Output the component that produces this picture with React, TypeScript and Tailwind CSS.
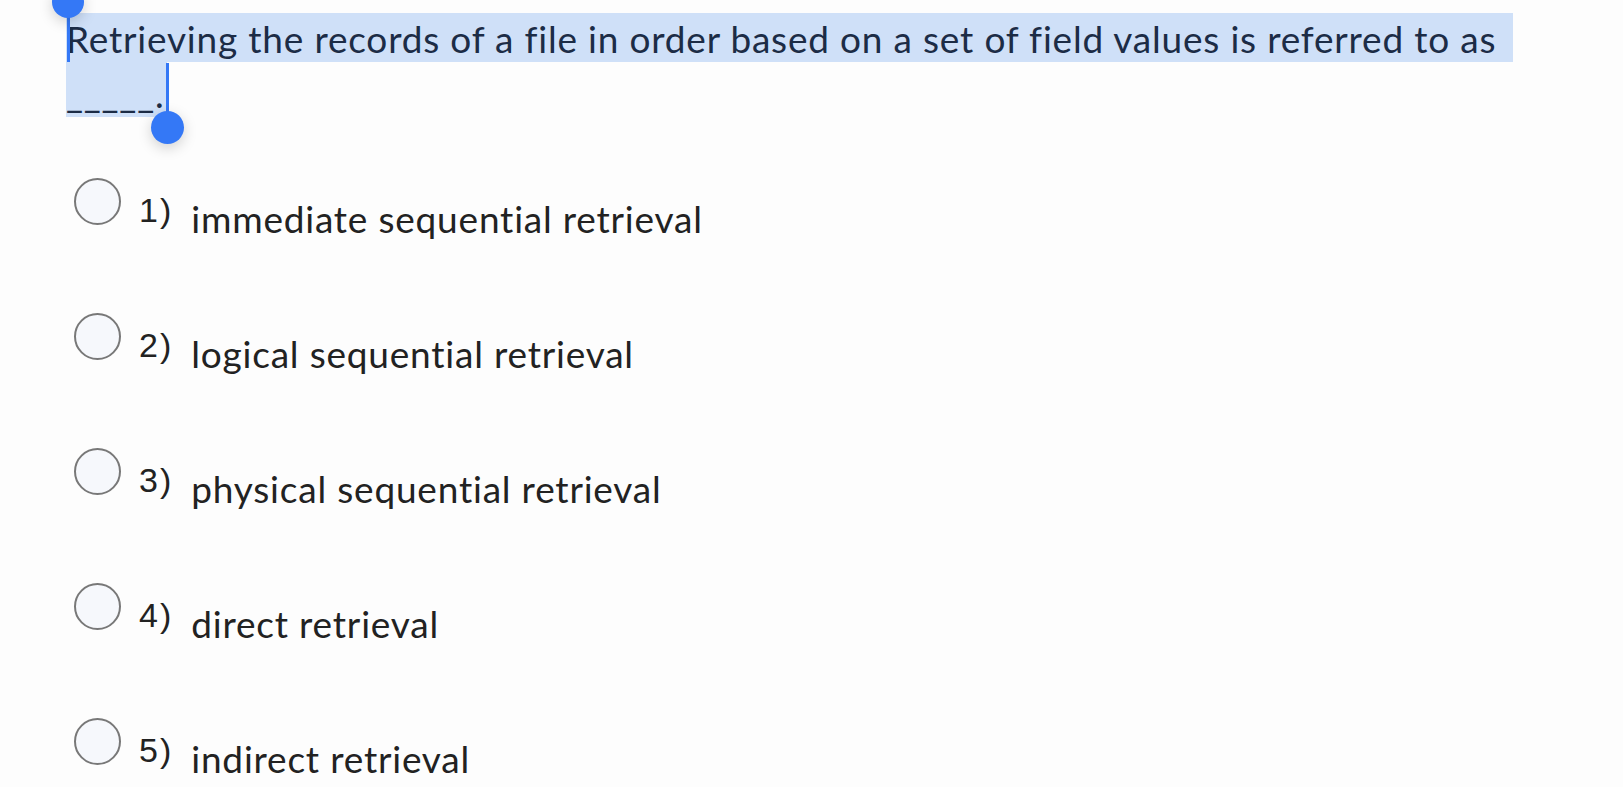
import React from "react";

const options = [
  { n: "1)", t: "immediate sequential retrieval" },
  { n: "2)", t: "logical sequential retrieval" },
  { n: "3)", t: "physical sequential retrieval" },
  { n: "4)", t: "direct retrieval" },
  { n: "5)", t: "indirect retrieval" },
];

export default function App() {
  return (
    <div className="relative h-screen w-full overflow-hidden bg-[#fdfdfd] font-['Lato','Noto_Sans',sans-serif] [font-variant-ligatures:none]">
      {/* question with selection highlight */}
      <div className="pt-[13px] pl-[66px]">
        <div className="h-[49px] w-[1447px] bg-[#cfe0f8] text-[37px] leading-[52px] tracking-[0.8px] text-[#1c2c46] whitespace-nowrap">
          Retrieving the records of a file in order based on a set of field values is referred to as
        </div>
        <div className="h-[55px] w-[101px] bg-[#cfe0f8] text-[37px] leading-[63px] tracking-[0.8px] text-[#1c2c46] whitespace-nowrap">
          _____.
        </div>
      </div>

      {/* options */}
      <div className="mt-[61px] flex flex-col gap-[74px] pl-[74px]">
        {options.map((o) => (
          <div key={o.n} className="flex items-start">
            <div className="h-[47px] w-[47px] shrink-0 rounded-full border-2 border-[#787878] bg-[#f6f8fc]" />
            <span className="ml-[18px] mt-[14px] font-['Liberation_Sans',Arial,sans-serif] text-[34px] leading-[36px] tracking-[2px] text-[#222222]">
              {o.n}
            </span>
            <span className="ml-[18px] mt-[20px] text-[37px] leading-[41px] tracking-[0.8px] text-[#222222]">
              {o.t}
            </span>
          </div>
        ))}
      </div>

      {/* selection handles (overlay) */}
      <div className="pointer-events-none absolute left-[67px] top-[14px] h-[48px] w-[3px] bg-[#3478f6]" />
      <div className="pointer-events-none absolute left-[52px] top-[-14px] h-[32px] w-[32px] rounded-full bg-[#3478f6] shadow-[0_4px_14px_rgba(0,0,0,0.18)]" />
      <div className="pointer-events-none absolute left-[166px] top-[63px] h-[52px] w-[3px] bg-[#3478f6]" />
      <div className="pointer-events-none absolute left-[151px] top-[111px] h-[33px] w-[33px] rounded-full bg-[#3478f6] shadow-[0_4px_14px_rgba(0,0,0,0.18)]" />
    </div>
  );
}
